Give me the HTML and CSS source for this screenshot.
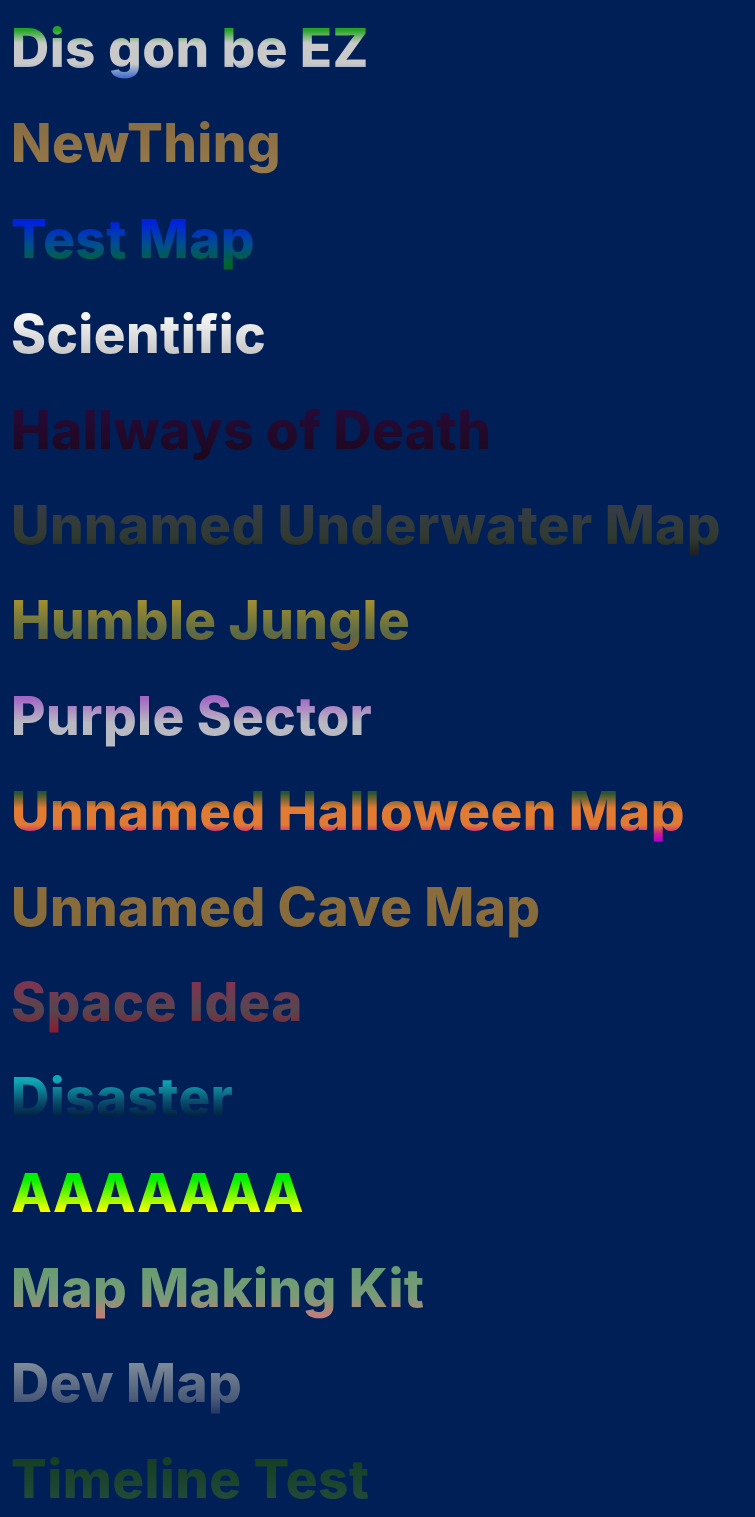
FILE: index.html
```html
<!DOCTYPE html>
<html lang="en">
<head>
    <meta charset="UTF-8">
    <meta name="viewport" content="width=device-width, initial-scale=1.0">
    <title>Maps</title>
    <link rel="stylesheet" href="styles.css">
</head>
<body>
    <ul id="map-list">
        <li class="map-name map-ez">Dis gon be EZ</li>
        <li class="map-name map-newthing">NewThing</li>
        <li class="map-name map-test">Test Map</li>
        <li class="map-name map-scientific">Scientific</li>
        <li class="map-name map-hallways">Hallways of Death</li>
        <li class="map-name map-underwater">Unnamed Underwater Map</li>
        <li class="map-name map-jungle">Humble Jungle</li>
        <li class="map-name map-purple">Purple Sector</li>
        <li class="map-name map-halloween">Unnamed Halloween Map</li>
        <li class="map-name map-cave">Unnamed Cave Map</li>
        <li class="map-name map-space">Space Idea</li>
        <li class="map-name map-disaster">Disaster</li>
        <li class="map-name map-aaa">AAAAAAA</li>
        <li class="map-name map-kit">Map Making Kit</li>
        <li class="map-name map-dev">Dev Map</li>
        <li class="map-name map-timeline">Timeline Test</li>
    </ul>
</body>
</html>
```

FILE: styles.css
```css
html {
    background-color: #001f57;
}
body {
    margin: 0;
    padding: 16px 0 0 11px;
    background-color: #001f57;
    font-family: Inter, Roboto, "Liberation Sans", sans-serif;
}
#map-list {
    list-style: none;
    margin: 0;
    padding: 0;
    display: flex;
    flex-direction: column;
    gap: 31.4px;
}
.map-name {
    width: fit-content;
    font-size: 53px;
    font-weight: 800;
    letter-spacing: 0.4px;
    line-height: 64px;
    white-space: nowrap;
    color: transparent;
    -webkit-background-clip: text;
    background-clip: text;
    -webkit-text-fill-color: transparent;
}
.map-ez {
    background-image: linear-gradient(#23a423 22%, #c9c9c9 42%, #c9c9c9 75%, #4572d0 95%);
}
.map-newthing {
    background-image: linear-gradient(#866a41, #977b4b);
}
.map-test {
    background-image: linear-gradient(#0022dd 25%, #00508a 60%, #00652b 90%);
}
.map-scientific {
    background-image: linear-gradient(#f6f6f6 22%, #c4c4c4 85%);
}
.map-hallways {
    background-image: linear-gradient(#260a36 22%, #1e0820 85%);
}
.map-underwater {
    background-image: linear-gradient(#353c46 22%, #303a30 70%, #1f2224 95%);
}
.map-jungle {
    background-image: linear-gradient(#a08d2e 22%, #5b6a45 70%, #7e5a2c 95%);
}
.map-purple {
    background-image: linear-gradient(#a267c4 22%, #b8b8c0 60%, #b8bac4 90%);
}
.map-halloween {
    background-image: linear-gradient(#2a5532 22%, #e27b32 45%, #e07a34 72%, #c8208c 85%, #b800d0 95%);
}
.map-cave {
    background-image: linear-gradient(#8c6e3a, #84693c);
}
.map-space {
    background-image: linear-gradient(#7e3450 22%, #554650 62%, #8a1e30 95%);
}
.map-disaster {
    background-image: linear-gradient(#10a6b4 25%, #0a4a6a 58%, #00183a 85%);
}
.map-aaa {
    background-image: linear-gradient(#00f000 28%, #ffff00 80%);
    filter: drop-shadow(0 0 1px #102030);
}
.map-kit {
    background-image: linear-gradient(#689c72 22%, #7a9a78 65%, #c27e7a 95%);
}
.map-dev {
    background-image: linear-gradient(#7a8898 22%, #4a5a78 75%, #2a3a68 95%);
}
.map-timeline {
    background-image: linear-gradient(#163f24 22%, #214a3a 85%);
}
```
